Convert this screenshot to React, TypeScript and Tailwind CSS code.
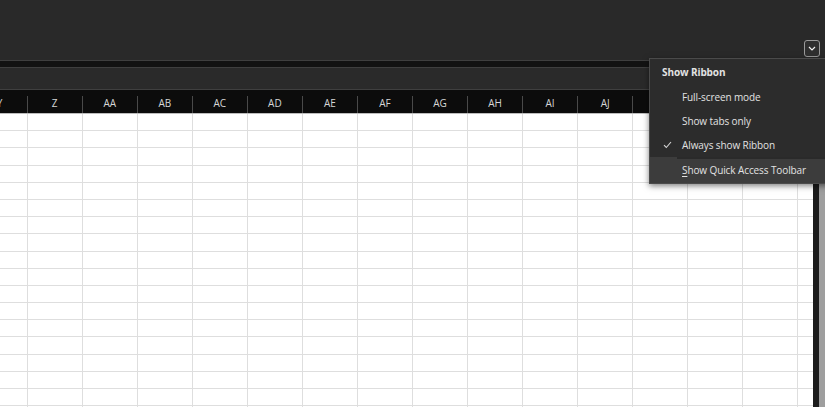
import React from "react";

const COLS = ["Y", "Z", "AA", "AB", "AC", "AD", "AE", "AF", "AG", "AH", "AI", "AJ", "AK", "AL", "AM", "AN"];
const ROWS = Array.from({ length: 18 }, (_, i) => i);

function Check() {
  return (
    <svg width="9" height="8" viewBox="0 0 9 8" className="block">
      <polyline points="1,4.2 3.3,6.5 8,1" fill="none" stroke="#d6d6d6" strokeWidth="1.1" />
    </svg>
  );
}

export default function App() {
  return (
    <div
      className="relative w-[825px] h-[407px] overflow-hidden bg-white flex flex-col"
      style={{ fontFamily: '"Open Sans", "Noto Sans", sans-serif' }}
    >
      {/* Ribbon area */}
      <div className="h-[60px] bg-[#292929] flex justify-end items-end pr-[5px] pb-[3px] shrink-0">
        <div className="w-[16px] h-[17px] rounded-[3px] border border-[#9a9a9a] bg-[#2f2f2f] flex items-center justify-center">
          <svg width="8" height="5" viewBox="0 0 8 5">
            <polyline points="1,1 4,4 7,1" fill="none" stroke="#f0f0f0" strokeWidth="1.2" />
          </svg>
        </div>
      </div>
      <div className="h-[1px] bg-[#3f3f3f] shrink-0" />
      <div className="h-[6px] bg-[#121212] shrink-0" />
      <div className="h-[1px] bg-[#3f3f3f] shrink-0" />
      <div className="h-[21px] bg-[#2a2a2a] shrink-0" />
      <div className="h-[1px] bg-[#3f3f3f] shrink-0" />

      {/* Column header */}
      <div className="h-[24px] bg-[#0c0c0c] border-b border-[#bdbdbd] overflow-hidden shrink-0 pt-[6px]">
        <div className="flex ml-[-27.4px]">
          {COLS.map((c) => (
            <div
              key={c}
              className="w-[55.06px] shrink-0 h-[17px] border-r border-[#4a4a4a] text-center text-[10px] leading-[15px] text-[#d6d6d6]"
            >
              {c}
            </div>
          ))}
        </div>
      </div>

      {/* Grid + scrollbar */}
      <div className="flex-1 flex overflow-hidden">
        <div className="w-[813px] overflow-hidden">
          <div className="ml-[-27.4px] flex flex-col">
            {ROWS.map((r) => (
              <div key={r} className="flex h-[17.2px] shrink-0">
                {COLS.map((c) => (
                  <div key={c} className="w-[55.06px] shrink-0 border-r border-b border-[#dedede]" />
                ))}
              </div>
            ))}
          </div>
        </div>
        <div className="w-[6px] bg-[#1c1c1c]" />
        <div className="w-[6px] bg-[#9e9e9e]" />
      </div>

      {/* Show Ribbon menu */}
      <div className="absolute left-[649px] top-[58px] w-[190px] h-[126px] bg-[#2c2c2c] border border-[#4a4a4a] shadow-[0_2px_6px_rgba(0,0,0,0.5)] text-[10px] tracking-[-0.1px] text-[#e2e2e2] flex flex-col">
        <div className="h-[26px] flex items-center pl-[12px] pt-[1px] font-bold">Show Ribbon</div>
        <div className="h-[24px] flex items-center pl-[32px]">Full-screen mode</div>
        <div className="h-[24px] flex items-center pl-[32px]">Show tabs only</div>
        <div className="h-[24px] flex items-center">
          <div className="w-[32px] flex justify-center pl-[3px]">
            <Check />
          </div>
          <span>Always show Ribbon</span>
        </div>
        <div className="h-[26px] bg-[#3c3c3c] flex flex-col">
          <div className="h-[2px] ml-[27px] bg-[#2a2a2a]" />
          <div className="flex-1 flex items-center pl-[32px] pb-[1px]">
            <span>
              <span className="underline underline-offset-2">S</span>how Quick Access Toolbar
            </span>
          </div>
        </div>
      </div>
    </div>
  );
}
